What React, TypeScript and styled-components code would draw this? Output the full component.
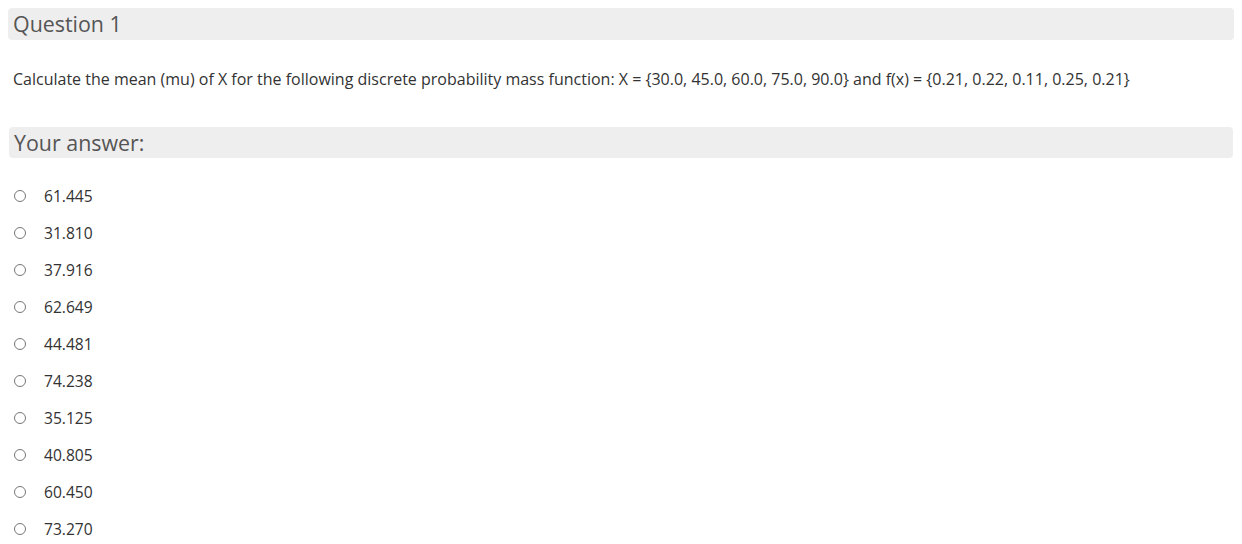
import React from 'react';
import styled, { createGlobalStyle } from 'styled-components';

const options = ['61.445', '31.810', '37.916', '62.649', '44.481', '74.238', '35.125', '40.805', '60.450', '73.270'];

export default function App() {
  return (
    <>
      <GlobalStyle />
      <Page>
        <HeaderBar>Question 1</HeaderBar>
        <QuestionText>
          Calculate the mean (mu) of X for the following discrete probability mass function: X = {'{'}30.0, 45.0, 60.0, 75.0, 90.0{'}'} and f(x) = {'{'}0.21, 0.22, 0.11, 0.25, 0.21{'}'}
        </QuestionText>
        <AnswerBar>Your answer:</AnswerBar>
        <OptionList>
          {options.map((o) => (
            <Option key={o}>
              <Radio />
              <OptionLabel>{o}</OptionLabel>
            </Option>
          ))}
        </OptionList>
      </Page>
    </>
  );
}

const GlobalStyle = createGlobalStyle`
  body {
    margin: 0;
    background: #fff;
    font-family: "Open Sans", "Liberation Sans", sans-serif;
  }
`;

const Page = styled.div`
  padding: 8px 8px 0 8px;
  display: flex;
  flex-direction: column;
`;

const HeaderBar = styled.div`
  height: 32px;
  line-height: 32px;
  background: #eeeeee;
  border-radius: 4px;
  padding-left: 5px;
  font-size: 21.4px;
  color: #555;
`;

const QuestionText = styled.div`
  margin-top: 28px;
  padding-left: 5px;
  font-size: 16px;
  line-height: 22px;
  color: #333;
`;

const AnswerBar = styled(HeaderBar)`
  margin-top: 37px;
  margin-left: 1px;
  margin-right: 1px;
  height: 31px;
  line-height: 31px;
`;

const OptionList = styled.div`
  margin-top: 19px;
  display: flex;
  flex-direction: column;
`;

const Option = styled.div`
  height: 37px;
  display: flex;
  align-items: center;
`;

const Radio = styled.span`
  box-sizing: border-box;
  width: 12px;
  height: 12px;
  border: 1px solid #777;
  border-radius: 50%;
  margin-left: 6px;
  margin-right: 18px;
`;

const OptionLabel = styled.span`
  font-size: 15.6px;
  color: #333;
`;
